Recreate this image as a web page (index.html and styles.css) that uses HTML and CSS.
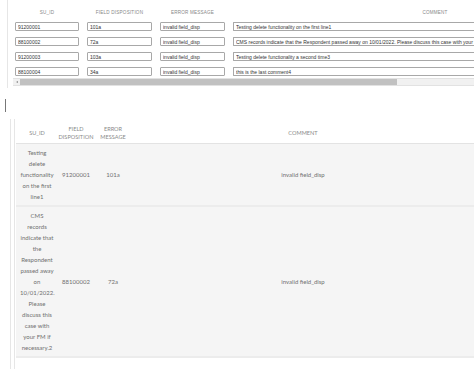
FILE: index.html
```html
<!DOCTYPE html>
<html>
<head>
<meta charset="utf-8">
<link rel="stylesheet" href="styles.css">
</head>
<body>
<div class="top">
  <div class="grid-head">
    <div class="c1">SU_ID</div>
    <div class="c2">FIELD DISPOSITION</div>
    <div class="c3">ERROR MESSAGE</div>
    <div class="c4">COMMENT</div>
  </div>
  <div class="grid-row">
    <input class="c1" value="91200001"><input class="c2" value="101a"><input class="c3" value="invalid field_disp"><input class="c4" value="Testing delete functionality on the first line1">
  </div>
  <div class="grid-row">
    <input class="c1" value="88100002"><input class="c2" value="72a"><input class="c3" value="invalid field_disp"><input class="c4" value="CMS records indicate that the Respondent passed away on 10/01/2022. Please discuss this case with your FM if necessary.2">
  </div>
  <div class="grid-row">
    <input class="c1" value="91200003"><input class="c2" value="103a"><input class="c3" value="invalid field_disp"><input class="c4" value="Testing delete functionality a second time3">
  </div>
  <div class="grid-row">
    <input class="c1" value="88100004"><input class="c2" value="34a"><input class="c3" value="invalid field_disp"><input class="c4" value="this is the last comment4">
  </div>
  <div class="scrollbar">
    <span class="arrow"></span>
    <span class="thumb"></span>
  </div>
</div>
<div class="caret"></div>
<div class="outer">
  <div class="inner">
    <table class="tbl">
      <thead>
        <tr>
          <th class="t1">SU_ID</th>
          <th class="t2">FIELD<br>DISPOSITION</th>
          <th class="t3">ERROR<br>MESSAGE</th>
          <th class="t4">COMMENT</th>
        </tr>
      </thead>
      <tbody>
        <tr>
          <td class="t1">Testing delete functionality on the first line1</td>
          <td>91200001</td>
          <td>101a</td>
          <td>invalid field_disp</td>
        </tr>
        <tr>
          <td class="t1">CMS<br>records indicate that the Respondent passed away on 10/01/2022. Please discuss this case with your FM if necessary.2</td>
          <td>88100002</td>
          <td>72a</td>
          <td>invalid field_disp</td>
        </tr>
      </tbody>
    </table>
  </div>
</div>
</body>
</html>
```
FILE: styles.css
```css
html, body {
  margin: 0;
  padding: 0;
  background: #fff;
  overflow: hidden;
}
body {
  width: 474px;
  height: 369px;
  font-family: "Liberation Sans", Arial, sans-serif;
}
.top {
  margin-left: 7px;
  border-left: 1px solid #e6e6e6;
  height: 88px;
  padding-left: 7px;
  overflow: hidden;
  box-sizing: border-box;
}
.grid-head, .grid-row {
  display: grid;
  grid-template-columns: 64px 65px 65px 404px;
  column-gap: 8px;
  width: 640px;
}
.grid-head {
  height: 22px;
  align-items: center;
  padding-top: 2px;
  box-sizing: border-box;
  font-size: 4.6px;
  color: #888;
  text-align: center;
  letter-spacing: 0.2px;
}
.grid-row {
  height: 15px;
}
.grid-row input {
  height: 9px;
  box-sizing: border-box;
  border: 1px solid #a8a8a8;
  border-radius: 1px;
  padding: 0 2px;
  margin: 0;
  font-family: "Liberation Sans", Arial, sans-serif;
  font-size: 5px;
  color: #333;
  background: #fff;
  outline: none;
  width: 100%;
}
.grid-row .c4 {
  border-right: none;
}
.scrollbar {
  display: flex;
  align-items: center;
  margin-top: -4px;
  margin-left: -2px;
  width: 470px;
  height: 6px;
  background: #f1f1f1;
  border-top: 1px solid #e2e2e2;
  border-bottom: 1px solid #e2e2e2;
}
.arrow {
  width: 0;
  height: 0;
  margin: 0 2px 0 3px;
  border-top: 1.5px solid transparent;
  border-bottom: 1.5px solid transparent;
  border-right: 2px solid #888;
}
.thumb {
  width: 377px;
  height: 6px;
  background: #c1c1c1;
}
.caret {
  margin: 11px 0 0 5px;
  width: 1px;
  height: 13px;
  background: #777;
}
.outer {
  margin: 7px 0 0 10px;
  border-left: 1px solid #e6e6e6;
  padding-left: 3px;
  height: 260px;
}
.inner {
  border-left: 1px solid #e6e6e6;
  padding-left: 1px;
  padding-top: 4px;
  height: 100%;
}
.tbl {
  border-collapse: collapse;
  width: 458px;
  font-family: Lato, "Liberation Sans", sans-serif;
  table-layout: fixed;
}
.tbl th {
  font-weight: normal;
  font-size: 5.6px;
  line-height: 8px;
  color: #8a8a8a;
  text-transform: uppercase;
  height: 20px;
  padding: 0;
  text-align: center;
  vertical-align: middle;
  border-bottom: 1px solid #e3e3e3;
}
.t1 { width: 42px; }
.t2 { width: 36px; }
.t3 { width: 38px; }
.tbl td {
  font-size: 6px;
  line-height: 11px;
  color: #707070;
  text-align: center;
  vertical-align: middle;
  background: #f5f5f5;
  padding: 3px 4px;
  border-bottom: 2px solid #ececec;
}
.tbl td.t1 {
  padding: 3px 4px;
}
```
